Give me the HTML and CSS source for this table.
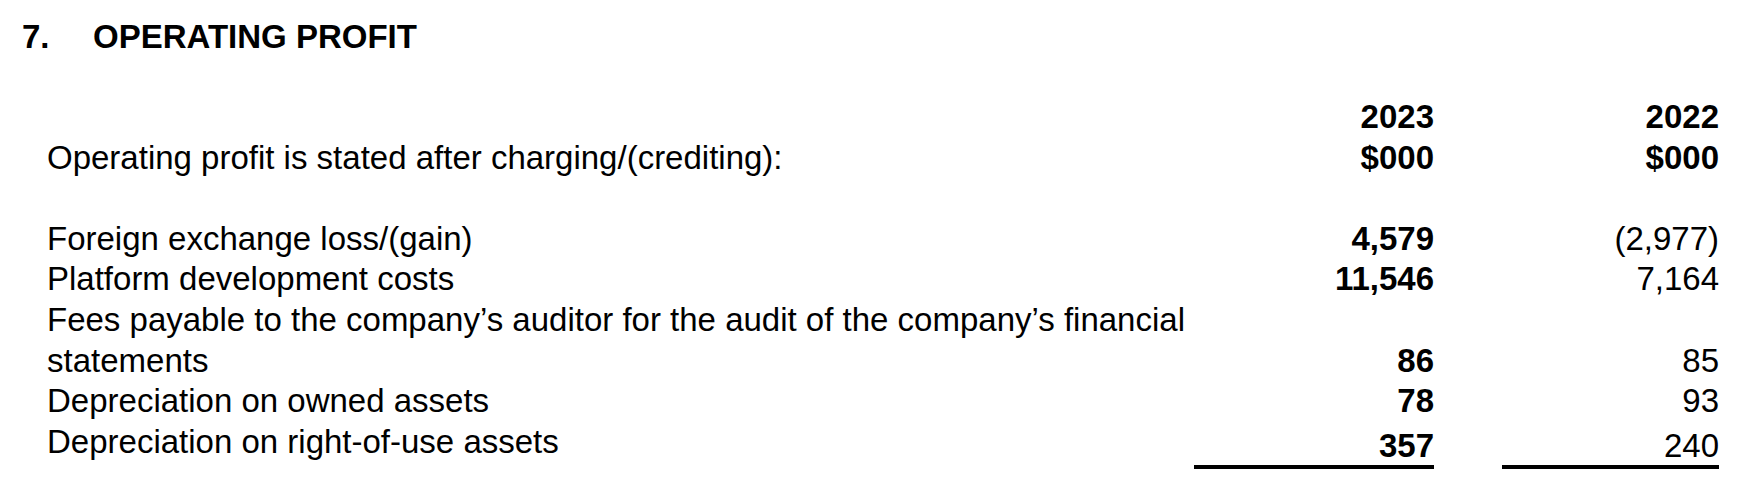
FILE: index.html
```html
<!DOCTYPE html>
<html lang="en">
<head>
<meta charset="utf-8">
<title>7. Operating profit</title>
<link rel="stylesheet" href="styles.css">
</head>
<body>
<div class="page">
  <h1 class="title"><span class="title-num">7.</span><span class="title-text">OPERATING PROFIT</span></h1>
  <div class="note">
    <div class="label head-label">Operating profit is stated after charging/(crediting):</div>
    <div class="val cur head"><div>2023</div><div>$000</div></div>
    <div class="val prev head"><div>2022</div><div>$000</div></div>

    <div class="spacer"></div>

    <div class="label">Foreign exchange loss/(gain)</div>
    <div class="val cur">4,579</div>
    <div class="val prev">(2,977)</div>

    <div class="label">Platform development costs</div>
    <div class="val cur">11,546</div>
    <div class="val prev">7,164</div>

    <div class="label">Fees payable to the company’s auditor for the audit of the company’s financial statements</div>
    <div class="val cur">86</div>
    <div class="val prev">85</div>

    <div class="label">Depreciation on owned assets</div>
    <div class="val cur">78</div>
    <div class="val prev">93</div>

    <div class="label">Depreciation on right-of-use assets</div>
    <div class="val cur total">357</div>
    <div class="val prev total">240</div>
  </div>
</div>
</body>
</html>
```
FILE: styles.css
```css
html, body {
  margin: 0;
  padding: 0;
  background: #ffffff;
}

body {
  font-family: "Liberation Sans", Arial, sans-serif;
  color: #000000;
  font-size: 33px;
  line-height: 40.6px;
}

.page {
  width: 1747px;
  height: 489px;
  box-sizing: border-box;
  padding: 16px 0 0 0;
}

.title {
  margin: 0;
  font-size: 33px;
  line-height: 41px;
  font-weight: bold;
  display: flex;
  padding-left: 22px;
}

.title-num {
  width: 71px;
}

.note {
  margin-top: 40px;
  padding-left: 47px;
  display: grid;
  grid-template-columns: 1147px 240px 285px;
  align-items: end;
}

.label {
  font-weight: normal;
}

.val {
  text-align: right;
}

.cur {
  font-weight: bold;
}

.prev {
  font-weight: normal;
  justify-self: end;
  width: 217px;
}

.head {
  font-weight: bold;
}

.spacer {
  grid-column: 1 / -1;
  height: 40.6px;
}

.total {
  border-bottom: 4px solid #000000;
  line-height: 39.6px;
  padding-top: 4px;
  margin-bottom: -7px;
}
```
